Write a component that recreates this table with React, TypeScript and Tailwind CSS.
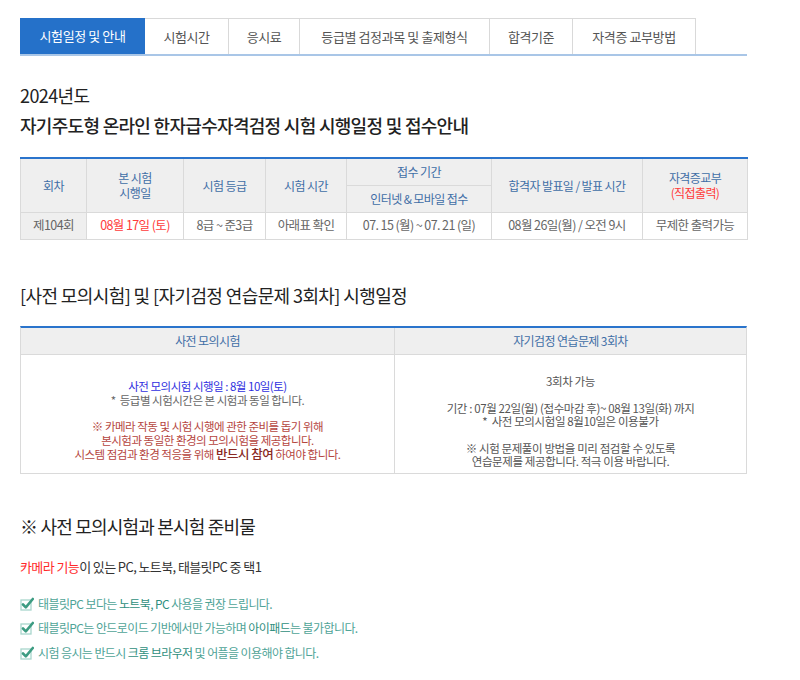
import React from "react";

const tabs = ["시험일정 및 안내", "시험시간", "응시료", "등급별 검정과목 및 출제형식", "합격기준", "자격증 교부방법"];
const tabW = ["w-[125px]", "w-[84px]", "w-[71px]", "w-[190px]", "w-[83px]", "w-[123px]"];

function Check() {
  return (
    <svg width="14" height="14" viewBox="0 0 14 14" className="shrink-0">
      <rect x="1" y="3" width="10" height="10" fill="none" stroke="#a8d6cc" strokeWidth="1.3" />
      <path d="M3 7.5 L5.8 10.3 L12.8 2" fill="none" stroke="#3d9c82" strokeWidth="2.6" strokeLinecap="round" strokeLinejoin="round" />
    </svg>
  );
}

export default function App() {
  const th = "border border-[#dadada] bg-[#efefef] text-[#3f6ea6] text-[12px] font-normal text-center align-middle tracking-[-0.6px] leading-[15px]";
  const td = "border border-[#dadada] text-[#666] text-[12.5px] text-center align-middle tracking-[-0.6px]";
  return (
    <div className="w-[800px] min-h-[680px] bg-white font-['Noto_Sans_CJK_KR',sans-serif] text-[#222] pt-[18px]">
      <div className="ml-[20px] w-[727px]">
        {/* Tabs */}
        <div className="flex border-b-2 border-[#a9c6e7] h-[38px]">
          {tabs.map((t, i) => (
            <div
              key={t}
              className={`${tabW[i]} flex items-center justify-center text-[13px] tracking-[-0.4px] ${
                i === 0
                  ? "bg-[#2571c9] text-white"
                  : "border-t border-r border-[#d9d9d9] text-[#555]"
              }`}
            >
              {t}
            </div>
          ))}
        </div>

        <div className="mt-[24px] text-[18px] leading-[30px] tracking-[-0.6px]">2024년도</div>
        <div className="text-[18px] leading-[30px] tracking-[-0.7px] font-medium">
          자기주도형 온라인 한자급수자격검정 시험 시행일정 및 접수안내
        </div>

        {/* Table 1 */}
        <table className="mt-[17px] w-[727px] table-fixed border-collapse border-t-2 border-t-[#2a74cc]">
          <colgroup>
            <col className="w-[66px]" />
            <col className="w-[97px]" />
            <col className="w-[82px]" />
            <col className="w-[81px]" />
            <col className="w-[145px]" />
            <col className="w-[151px]" />
            <col className="w-[105px]" />
          </colgroup>
          <tbody>
            <tr className="h-[27px]">
              <th rowSpan={2} className={th}>회차</th>
              <th rowSpan={2} className={th}>본 시험<br />시행일</th>
              <th rowSpan={2} className={th}>시험 등급</th>
              <th rowSpan={2} className={th}>시험 시간</th>
              <th className={th}>접수 기간</th>
              <th rowSpan={2} className={th}>합격자 발표일 / 발표 시간</th>
              <th rowSpan={2} className={th}>자격증교부<br /><span className="text-[#ff3a3a]">(직접출력)</span></th>
            </tr>
            <tr className="h-[27px]">
              <th className={th}>인터넷 &amp; 모바일 접수</th>
            </tr>
            <tr className="h-[27px]">
              <td className={`${td} bg-[#efefef] text-[#444]`}>제104회</td>
              <td className={`${td} text-[#ff3b3b]`}>08월 17일 (토)</td>
              <td className={td}>8급 ~ 준3급</td>
              <td className={td}>아래표 확인</td>
              <td className={td}>07. 15 (월) ~ 07. 21 (일)</td>
              <td className={td}>08월 26일(월) / 오전 9시</td>
              <td className={td}>무제한 출력가능</td>
            </tr>
          </tbody>
        </table>

        <div className="mt-[40px] text-[18px] leading-[30px] tracking-[-0.6px]">
          [사전 모의시험] 및 [자기검정 연습문제 3회차] 시행일정
        </div>

        {/* Table 2 */}
        <div className="mt-[16px] border-t-2 border-[#2a74cc] border-x border-b border-x-[#dadada] border-b-[#dadada] grid grid-cols-[374px_351px]">
          <div className="h-[27px] bg-[#efefef] border-r border-b border-[#dadada] flex items-center justify-center text-[12px] text-[#3f6ea6] tracking-[-0.6px]">
            사전 모의시험
          </div>
          <div className="h-[27px] bg-[#efefef] border-b border-[#dadada] flex items-center justify-center text-[12px] text-[#3f6ea6] tracking-[-0.6px]">
            자기검정 연습문제 3회차
          </div>
          <div className="h-[118px] border-r border-[#dadada] flex flex-col items-center justify-center pt-[15px] text-[11.5px] leading-[13.5px] text-center tracking-[-0.5px]">
            <div className="text-[#3030e0]">사전 모의시험 시행일 : 8월 10일(토)</div>
            <div className="text-[#666]">*&nbsp; 등급별 시험시간은 본 시험과 동일 합니다.</div>
            <div className="h-[13px]" />
            <div className="text-[#b5453e]">※ 카메라 작동 및 시험 시행에 관한 준비를 돕기 위해</div>
            <div className="text-[#b5453e]">본시험과 동일한 환경의 모의시험을 제공합니다.</div>
            <div className="text-[#b5453e]">
              시스템 점검과 환경 적응을 위해 <span className="text-[#8a2a24] text-[12.5px] font-medium">반드시 참여</span> 하여야 합니다.
            </div>
          </div>
          <div className="h-[118px] flex flex-col items-center justify-center pt-[17px] text-[11.5px] leading-[13.4px] text-center text-[#555] tracking-[-0.4px]">
            <div>3회차 가능</div>
            <div className="h-[13px]" />
            <div>기간 : 07월 22일(월) (접수마감 후)~ 08월 13일(화) 까지</div>
            <div>*&nbsp; 사전 모의시험일 8월10일은 이용불가</div>
            <div className="h-[13px]" />
            <div>※ 시험 문제풀이 방법을 미리 점검할 수 있도록</div>
            <div>연습문제를 제공합니다. 적극 이용 바랍니다.</div>
          </div>
        </div>

        <div className="mt-[37px] text-[18px] leading-[30px] tracking-[-0.8px]">※ 사전 모의시험과 본시험 준비물</div>

        <div className="mt-[16px] text-[13px] leading-[20px] tracking-[-0.6px] text-[#333]">
          <span className="text-[#ff2a2a]">카메라 기능</span>이 있는 PC, 노트북, 태블릿PC 중 택1
        </div>

        <div className="mt-[15px] flex flex-col text-[12px] leading-[24.5px] text-[#4fa497] tracking-[-0.6px]">
          <div className="flex items-center gap-[4px]"><Check /><span>태블릿PC 보다는 <span className="text-[#2f8f80]">노트북, PC</span> 사용을 권장 드립니다.</span></div>
          <div className="flex items-center gap-[4px]"><Check /><span>태블릿PC는 안드로이드 기반에서만 가능하며 <span className="text-[#2f8f80]">아이패드</span>는 불가합니다.</span></div>
          <div className="flex items-center gap-[4px]"><Check /><span>시험 응시는 반드시 <span className="text-[#2f8f80]">크롬 브라우저</span> 및 어플을 이용해야 합니다.</span></div>
        </div>
      </div>
    </div>
  );
}
